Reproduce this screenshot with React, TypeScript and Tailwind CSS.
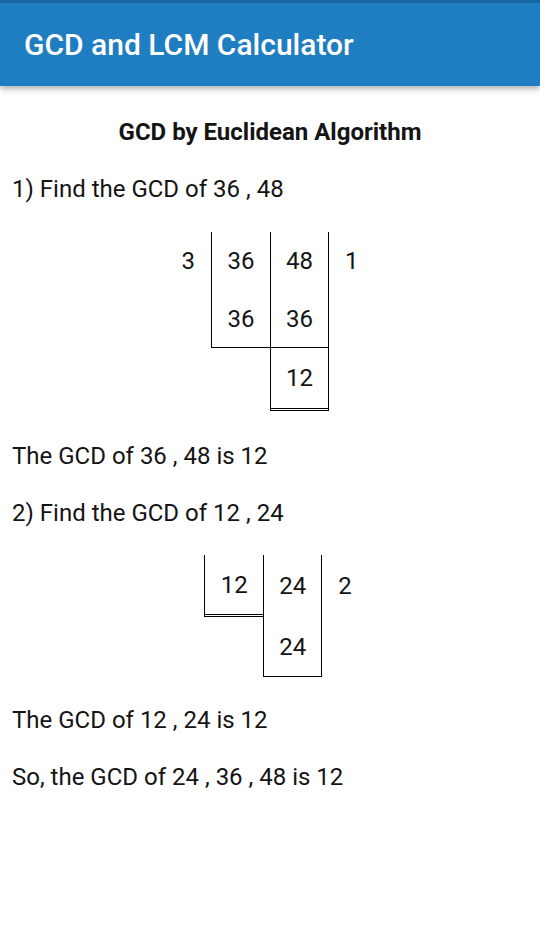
import React from 'react'

type Cell = { text?: string; cls?: string }

function DivTable({ rows }: { rows: Cell[][] }) {
  return (
    <div className="flex justify-center">
      <div className="grid grid-cols-[auto_59px_59px_auto]">
        {rows.map((row, i) =>
          row.map((c, j) => (
            <div
              key={`${i}-${j}`}
              className={`flex items-center justify-center border-black ${j === 0 || j === 3 ? 'px-4' : ''} ${c.cls ?? ''}`}
            >
              {c.text}
            </div>
          ))
        )}
      </div>
    </div>
  )
}

export default function App() {
  return (
    <div className="min-h-[926px] bg-white text-[24px] text-[#141414]" style={{ fontFamily: 'Roboto, "Noto Sans", sans-serif' }}>
      <div className="flex h-[86px] items-center border-t-[3px] border-[#1565a3] bg-[#1f7dc1] px-6 shadow-[0_3px_6px_rgba(0,0,0,0.3)]">
        <h1 className="text-[30px] font-medium leading-none text-white">GCD and LCM Calculator</h1>
      </div>

      <div className="flex flex-col px-3 leading-[26px]">
        <p className="mt-[33px] text-center font-bold">GCD by Euclidean Algorithm</p>
        <p className="mt-[31px]">1) Find the GCD of 36 , 48</p>
        <div className="mt-[30px]">
          <DivTable
            rows={[
              [{ text: '3', cls: 'h-[58px]' }, { text: '36', cls: 'border-l' }, { text: '48', cls: 'border-x' }, { text: '1' }],
              [{ cls: 'h-[58px]' }, { text: '36', cls: 'border-l border-b' }, { text: '36', cls: 'border-x border-b' }, {}],
              [{ cls: 'h-[63px]' }, {}, { text: '12', cls: 'border-x border-b-[3px] border-double' }, {}],
            ]}
          />
        </div>
        <p className="mt-[32px]">The GCD of 36 , 48 is 12</p>
        <p className="mt-[31px]">2) Find the GCD of 12 , 24</p>
        <div className="mt-[29px]">
          <DivTable
            rows={[
              [{ cls: 'h-[62px]' }, { text: '12', cls: 'border-l border-b-[3px] border-double' }, { text: '24', cls: 'border-x' }, { text: '2' }],
              [{ cls: 'h-[60px]' }, {}, { text: '24', cls: 'border-x border-b' }, {}],
            ]}
          />
        </div>
        <p className="mt-[30px]">The GCD of 12 , 24 is 12</p>
        <p className="mt-[31px]">So, the GCD of 24 , 36 , 48 is 12</p>
      </div>
    </div>
  )
}
